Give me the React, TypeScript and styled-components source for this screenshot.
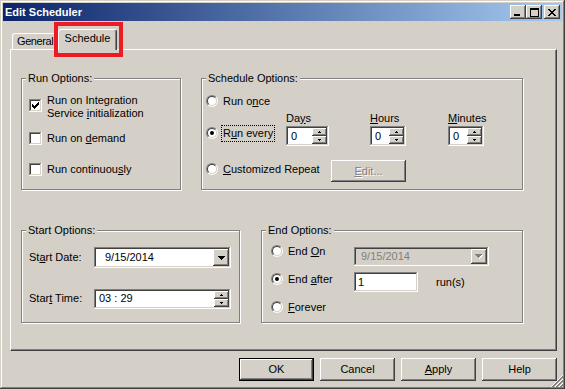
import styled, { createGlobalStyle, css } from 'styled-components';

const FACE = '#d4d0c8';
const SHADOW = '#808080';
const DARK = '#404040';

const GlobalStyle = createGlobalStyle`
  * { box-sizing: border-box; }
  html, body { margin: 0; padding: 0; background: ${FACE}; }
  body {
    font-family: 'Liberation Sans', Arial, sans-serif;
    font-size: 11px;
    line-height: 13px;
    color: #000;
  }
`;

const raised = css`
  background: ${FACE};
  box-shadow: inset -1px -1px ${DARK}, inset 1px 1px #fff, inset -2px -2px ${SHADOW}, inset 2px 2px ${FACE};
`;

const sunken = css`
  box-shadow: inset -1px -1px #fff, inset 1px 1px ${SHADOW}, inset -2px -2px ${FACE}, inset 2px 2px ${DARK};
`;

const disabledText = css`
  color: ${SHADOW};
  text-shadow: 1px 1px #fff;
`;

// tiny classic glyphs, drawn pixel by pixel
const CHECK = ['......x', '.....xx', 'x...xxx', 'xx.xxx.', 'xxxxx..', '.xxx...', '..x....'];
const DROP = ['xxxxxxx', '.xxxxx.', '..xxx..', '...x...'];
const SPIN_UP = ['..x..', '.xxx.'];
const SPIN_DOWN = ['.xxx.', '..x..'];
const CLOSE = ['xx....xx', '.xx..xx.', '..xxxx..', '...xx...', '..xxxx..', '.xx..xx.', 'xx....xx'];
const MAXIMIZE = ['xxxxxxxxx', 'xxxxxxxxx', 'x.......x', 'x.......x', 'x.......x', 'x.......x', 'x.......x', 'x.......x', 'xxxxxxxxx'];
const MINIMIZE = ['xxxxxx', 'xxxxxx'];

function Pixels({ rows, color = '#000', shade }: { rows: string[]; color?: string; shade?: string }) {
  const w = rows[0].length;
  const h = rows.length;
  let d = '';
  rows.forEach((r, y) =>
    r.split('').forEach((c, x) => {
      if (c === 'x') d += `M${x} ${y}h1v1h-1z`;
    })
  );
  const W = shade ? w + 1 : w;
  const H = shade ? h + 1 : h;
  return (
    <svg width={W} height={H} viewBox={`0 0 ${W} ${H}`} shapeRendering="crispEdges" style={{ display: 'block' }}>
      {shade && <path d={d} fill={shade} transform="translate(1 1)" />}
      <path d={d} fill={color} />
    </svg>
  );
}

function Gripper() {
  let white = '';
  let gray = '';
  for (let y = 0; y < 12; y++) {
    for (let x = 0; x < 12; x++) {
      const s = x + y;
      if (s < 11) continue;
      if (s % 4 === 3) white += `M${x} ${y}h1v1h-1z`;
      else if (s % 4 === 0 || s % 4 === 1) gray += `M${x} ${y}h1v1h-1z`;
    }
  }
  return (
    <GripBox width={12} height={12} viewBox="0 0 12 12" shapeRendering="crispEdges">
      <path d={white} fill="#fff" />
      <path d={gray} fill={SHADOW} />
    </GripBox>
  );
}

function CheckBox({ checked, top, children }: { checked?: boolean; top: number; children: React.ReactNode }) {
  return (
    <CheckRow $top={top}>
      <CheckSquare>{checked && <Pixels rows={CHECK} />}</CheckSquare>
      <Label>{children}</Label>
    </CheckRow>
  );
}

function Radio({ checked, focused, children }: { checked?: boolean; focused?: boolean; children: React.ReactNode }) {
  return (
    <RadioRow>
      <RadioRing>
        <RadioWell $on={checked} />
      </RadioRing>
      <Label $focus={focused}>{children}</Label>
    </RadioRow>
  );
}

function Spin({ width, value }: { width: number; value: string }) {
  return (
    <SpinField $w={width}>
      <FieldValue $indent={3}>{value}</FieldValue>
      <SpinButtons>
        <SpinBtn>
          <Pixels rows={SPIN_UP} />
        </SpinBtn>
        <SpinBtn>
          <Pixels rows={SPIN_DOWN} />
        </SpinBtn>
      </SpinButtons>
    </SpinField>
  );
}

function Combo({ width, height, value, indent, disabled }: { width: number; height: number; value: string; indent: number; disabled?: boolean }) {
  return (
    <ComboField $w={width} $h={height} $disabled={disabled}>
      <FieldValue $indent={indent} $disabled={disabled}>{value}</FieldValue>
      <ComboButton>
        {disabled ? <Pixels rows={DROP} color={SHADOW} shade="#fff" /> : <Pixels rows={DROP} />}
      </ComboButton>
    </ComboField>
  );
}

export default function App() {
  return (
    <>
      <GlobalStyle />
      <Window>
        <TitleBar>
          <Title>Edit Scheduler</Title>
          <TitleButton $bottom>
            <Pixels rows={MINIMIZE} />
          </TitleButton>
          <TitleButton>
            <Pixels rows={MAXIMIZE} />
          </TitleButton>
          <TitleButton $gap>
            <Pixels rows={CLOSE} />
          </TitleButton>
        </TitleBar>

        <Body>
          <TabStrip>
            <Tab>General</Tab>
            <Tab $active>
              Schedule
              <Highlight />
            </Tab>
          </TabStrip>

          <Panel>
            <GroupRow>
              <Group $w={160} $h={112}>
                <Legend>Run Options:</Legend>
                <RunList>
                  <CheckBox checked top={0}>
                    Run on Integration
                    <br />
                    Service <u>i</u>nitialization
                  </CheckBox>
                  <CheckBox top={12}>
                    Run on <u>d</u>emand
                  </CheckBox>
                  <CheckBox top={18}>
                    Run continuou<u>s</u>ly
                  </CheckBox>
                </RunList>
              </Group>

              <Group $w={322} $h={112}>
                <Legend>Schedule Options:</Legend>
                <ScheduleBody>
                  <Radio>
                    Run o<u>n</u>ce
                  </Radio>
                  <EveryRow>
                    <EveryRadio>
                      <Radio checked focused>
                        R<u>u</u>n every
                      </Radio>
                    </EveryRadio>
                    <UnitColumn $w={84}>
                      <Label>
                        Da<u>y</u>s
                      </Label>
                      <Spin width={43} value="0" />
                    </UnitColumn>
                    <UnitColumn $w={78}>
                      <Label>
                        <u>H</u>ours
                      </Label>
                      <Spin width={36} value="0" />
                    </UnitColumn>
                    <UnitColumn $w={60}>
                      <Label>
                        <u>M</u>inutes
                      </Label>
                      <Spin width={36} value="0" />
                    </UnitColumn>
                  </EveryRow>
                  <CustomRow>
                    <CustomRadio>
                      <Radio>
                        <u>C</u>ustomized Repeat
                      </Radio>
                    </CustomRadio>
                    <PushButton $h={22} disabled>
                      <u>E</u>dit...
                    </PushButton>
                  </CustomRow>
                </ScheduleBody>
              </Group>
            </GroupRow>

            <GroupRow $second>
              <Group $w={219} $h={93}>
                <Legend>Start Options:</Legend>
                <StartBody>
                  <FieldRow>
                    <FieldLabel>
                      St<u>a</u>rt Date:
                    </FieldLabel>
                    <Combo width={137} height={21} value="9/15/2014" indent={9} />
                  </FieldRow>
                  <FieldRow>
                    <FieldLabel>
                      Star<u>t</u> Time:
                    </FieldLabel>
                    <Spin width={137} value="03 : 29" />
                  </FieldRow>
                </StartBody>
              </Group>

              <Group $w={262} $h={93}>
                <Legend>End Options:</Legend>
                <EndBody>
                  <EndRadios>
                    <Radio>
                      End <u>O</u>n
                    </Radio>
                    <Radio checked>
                      End <u>a</u>fter
                    </Radio>
                    <Radio>
                      <u>F</u>orever
                    </Radio>
                  </EndRadios>
                  <EndControls>
                    <Combo width={135} height={19} value="9/15/2014" indent={5} disabled />
                    <AfterRow>
                      <TextField $w={64}>
                        <FieldValue $indent={2}>1</FieldValue>
                      </TextField>
                      <Units>run(s)</Units>
                    </AfterRow>
                  </EndControls>
                </EndBody>
              </Group>
            </GroupRow>
          </Panel>

          <ButtonRow>
            <PushButton $default>OK</PushButton>
            <PushButton>Cancel</PushButton>
            <PushButton>
              <u>A</u>pply
            </PushButton>
            <PushButton>Help</PushButton>
          </ButtonRow>
        </Body>
        <Gripper />
      </Window>
    </>
  );
}

const Window = styled.div`
  position: relative;
  width: 565px;
  height: 389px;
  padding: 3px;
  background: ${FACE};
  box-shadow: inset -1px -1px ${DARK}, inset 1px 1px ${FACE}, inset -2px -2px ${SHADOW}, inset 2px 2px #fff;
`;

const TitleBar = styled.div`
  display: flex;
  align-items: center;
  height: 18px;
  padding: 0 2px;
  background: linear-gradient(to right, #0a246a, #a6caf0);
  color: #fff;
  font-weight: bold;
`;

const Title = styled.span`
  flex: 1;
`;

const TitleButton = styled.span<{ $gap?: boolean; $bottom?: boolean }>`
  ${raised}
  width: 16px;
  height: 14px;
  display: flex;
  align-items: ${({ $bottom }) => ($bottom ? 'flex-end' : 'center')};
  justify-content: ${({ $bottom }) => ($bottom ? 'flex-start' : 'center')};
  padding: ${({ $bottom }) => ($bottom ? '0 0 3px 4px' : '0')};
  margin-left: ${({ $gap }) => ($gap ? 2 : 0)}px;
`;

const Body = styled.div`
  display: flex;
  flex-direction: column;
  padding: 8px 5px 0 7px;
`;

const TabStrip = styled.div`
  display: flex;
  align-items: flex-end;
  height: 20px;
  padding-left: 2px;
`;

const Tab = styled.div<{ $active?: boolean }>`
  position: relative;
  z-index: ${({ $active }) => ($active ? 2 : 1)};
  display: flex;
  align-items: center;
  justify-content: ${({ $active }) => ($active ? 'center' : 'flex-start')};
  width: ${({ $active }) => ($active ? 59 : 48)}px;
  height: ${({ $active }) => ($active ? 21 : 16)}px;
  margin: ${({ $active }) => ($active ? '0 -2px -1px -2px' : '0')};
  padding: ${({ $active }) => ($active ? '0 0 3px 0' : '0 0 0 4px')};
  letter-spacing: ${({ $active }) => ($active ? 0 : -0.4)}px;
  background: ${FACE};
  border-top: 1px solid #fff;
  border-left: 1px solid #fff;
  border-right: 1px solid ${DARK};
  border-radius: 3px 3px 0 0;
  box-shadow: inset -1px 0 ${SHADOW};
`;

const Highlight = styled.span`
  position: absolute;
  left: -5px;
  top: -8px;
  width: 69px;
  height: 35px;
  border: 4px solid #ed1c24;
`;

const Panel = styled.div`
  height: 302px;
  padding: 28px 0 0 10px;
  border-top: 1px solid #fff;
  border-left: 1px solid #fff;
  border-right: 1px solid ${DARK};
  border-bottom: 1px solid ${DARK};
  box-shadow: inset -1px -1px ${SHADOW};
`;

const GroupRow = styled.div<{ $second?: boolean }>`
  display: flex;
  gap: ${({ $second }) => ($second ? 21 : 20)}px;
  margin-top: ${({ $second }) => ($second ? 40 : 0)}px;
`;

const Group = styled.div<{ $w: number; $h: number }>`
  position: relative;
  width: ${({ $w }) => $w}px;
  height: ${({ $h }) => $h}px;
  border: 1px solid ${SHADOW};
  box-shadow: inset 1px 1px #fff, 1px 1px #fff;
`;

const Legend = styled.span`
  position: absolute;
  top: -7px;
  left: 4px;
  padding: 0 2px;
  background: ${FACE};
`;

const Label = styled.span<{ $focus?: boolean }>`
  white-space: nowrap;
  outline: ${({ $focus }) => ($focus ? `1px dotted #000` : 'none')};
  outline-offset: 0;
  padding: ${({ $focus }) => ($focus ? '1px 1px' : '0')};
  margin: ${({ $focus }) => ($focus ? '0 -1px' : '0')};
`;

const RunList = styled.div`
  display: flex;
  flex-direction: column;
  padding: 15px 0 0 7px;
`;

const CheckRow = styled.div<{ $top: number }>`
  display: flex;
  align-items: center;
  gap: 5px;
  margin-top: ${({ $top }) => $top}px;
  & > span:first-child {
    margin-top: ${({ $top }) => ($top === 0 ? -3 : 0)}px;
  }
`;

const CheckSquare = styled.span`
  ${sunken}
  flex: none;
  display: flex;
  align-items: center;
  justify-content: center;
  width: 13px;
  height: 13px;
  background-color: #fff;
`;

const RadioRow = styled.div`
  display: flex;
  align-items: center;
  gap: 5px;
  height: 14px;
`;

const RadioRing = styled.span`
  flex: none;
  display: flex;
  width: 12px;
  height: 12px;
  border-radius: 50%;
  border: 1px solid;
  border-color: ${SHADOW} #fff #fff ${SHADOW};
`;

const RadioWell = styled.span<{ $on?: boolean }>`
  flex: 1;
  display: flex;
  align-items: center;
  justify-content: center;
  border-radius: 50%;
  background: #fff;
  border: 1px solid;
  border-color: ${DARK} ${FACE} ${FACE} ${DARK};
  &::after {
    content: '';
    display: ${({ $on }) => ($on ? 'block' : 'none')};
    width: 4px;
    height: 4px;
    border-radius: 50%;
    background: #000;
  }
`;

const ScheduleBody = styled.div`
  display: flex;
  flex-direction: column;
  padding: 15px 0 0 4px;
`;

const EveryRow = styled.div`
  display: flex;
  align-items: flex-end;
  margin-top: 4px;
`;

const EveryRadio = styled.div`
  width: 80px;
  margin-bottom: 6px;
`;

const UnitColumn = styled.div<{ $w: number }>`
  display: flex;
  flex-direction: column;
  align-items: flex-start;
  gap: 1px;
  width: ${({ $w }) => $w}px;
`;

const CustomRow = styled.div`
  display: flex;
  align-items: flex-start;
  margin-top: 14px;
`;

const CustomRadio = styled.div`
  width: 125px;
  padding-top: 2px;
`;

const SpinField = styled.div<{ $w: number }>`
  ${sunken}
  display: flex;
  width: ${({ $w }) => $w}px;
  height: 20px;
  padding: 2px;
  background-color: #fff;
`;

const FieldValue = styled.span<{ $indent: number; $disabled?: boolean }>`
  flex: 1;
  display: flex;
  align-items: center;
  padding-left: ${({ $indent }) => $indent}px;
  ${({ $disabled }) => $disabled && `color: ${SHADOW};`}
`;

const SpinButtons = styled.div`
  display: flex;
  flex-direction: column;
  width: 15px;
`;

const SpinBtn = styled.span`
  ${raised}
  flex: 1;
  display: flex;
  align-items: center;
  justify-content: center;
`;

const ComboField = styled.div<{ $w: number; $h: number; $disabled?: boolean }>`
  ${sunken}
  display: flex;
  width: ${({ $w }) => $w}px;
  height: ${({ $h }) => $h}px;
  padding: 2px;
  background-color: ${({ $disabled }) => ($disabled ? FACE : '#fff')};
`;

const ComboButton = styled.span`
  ${raised}
  display: flex;
  align-items: center;
  justify-content: center;
  width: 16px;
`;

const StartBody = styled.div`
  display: flex;
  flex-direction: column;
  gap: 20px;
  padding: 16px 0 0 7px;
`;

const FieldRow = styled.div`
  display: flex;
  align-items: center;
  height: 21px;
`;

const FieldLabel = styled.span`
  width: 65px;
`;

const EndBody = styled.div`
  display: flex;
  padding: 13px 0 0 9px;
`;

const EndRadios = styled.div`
  display: flex;
  flex-direction: column;
  gap: 14px;
  width: 83px;
`;

const EndControls = styled.div`
  display: flex;
  flex-direction: column;
  gap: 6px;
  margin-top: 3px;
`;

const AfterRow = styled.div`
  display: flex;
  align-items: center;
`;

const TextField = styled.div<{ $w: number }>`
  ${sunken}
  display: flex;
  width: ${({ $w }) => $w}px;
  height: 20px;
  padding: 2px;
  background-color: #fff;
`;

const Units = styled.span`
  margin-left: 18px;
`;

const ButtonRow = styled.div`
  display: flex;
  justify-content: flex-end;
  gap: 6px;
  margin-top: 7px;
`;

const PushButton = styled.button<{ $default?: boolean; $h?: number }>`
  ${raised}
  display: flex;
  align-items: center;
  justify-content: center;
  width: 75px;
  height: ${({ $h }) => $h ?? 23}px;
  padding: 0;
  border: ${({ $default }) => ($default ? '1px solid #000' : 'none')};
  font: inherit;
  color: #000;
  &:disabled {
    ${disabledText}
  }
`;

const GripBox = styled.svg`
  position: absolute;
  right: 2px;
  bottom: 2px;
  display: block;
`;
